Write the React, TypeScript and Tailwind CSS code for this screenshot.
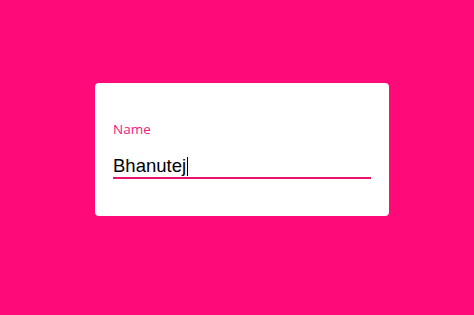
export default function App() {
  return (
    <div className="min-h-[315px] w-full bg-[#ff0a78] pt-[83px] pl-[95px]">
      <div className="w-[294px] h-[133px] rounded-[4px] bg-white pl-[18px] pr-[18px] pt-[38px]">
        <label className="block text-[13.5px] leading-[16px] text-[#f0207e] font-['Open_Sans',sans-serif]">
          Name
        </label>
        <div className="mt-[16px] flex items-end border-b-[2.5px] border-[#e8146e] h-[26px] pb-[1px]">
          <span className="text-[18.5px] leading-[21px] text-black font-['Liberation_Sans',sans-serif]">
            Bhanutej
          </span>
          <span className="ml-[1px] mb-0 w-px h-[19px] bg-black" />
        </div>
      </div>
    </div>
  );
}
